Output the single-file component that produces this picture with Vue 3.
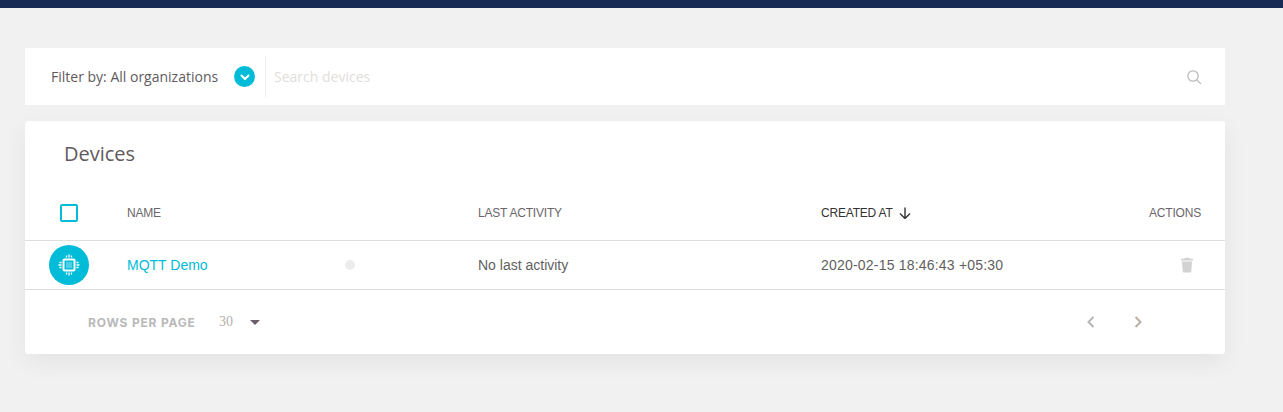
<script setup>
const columns = [
  { key: 'select', label: '' },
  { key: 'name', label: 'NAME' },
  { key: 'activity', label: 'LAST ACTIVITY' },
  { key: 'created', label: 'CREATED AT' },
  { key: 'actions', label: 'ACTIONS' }
]

const device = {
  name: 'MQTT Demo',
  activity: 'No last activity',
  created: '2020-02-15 18:46:43 +05:30'
}
</script>

<template>
  <div class="page">
    <div class="topbar"></div>
    <main class="content">
      <section class="filter-bar">
        <span class="filter-label">Filter by: All organizations</span>
        <span class="filter-toggle">
          <svg width="12" height="12" viewBox="0 0 12 12" fill="none" stroke="#fff" stroke-width="2" stroke-linecap="round" stroke-linejoin="round">
            <path d="M2.5 4.5 6 8l3.5-3.5" />
          </svg>
        </span>
        <span class="filter-search">Search devices</span>
        <svg class="search-icon" width="16" height="16" viewBox="0 0 16 16" fill="none" stroke="#bdbdbd" stroke-width="1.3" stroke-linecap="round">
          <circle cx="7" cy="7" r="5.2" />
          <path d="M11 11l3.6 3.6" />
        </svg>
      </section>

      <section class="card">
        <h2 class="card-title">Devices</h2>

        <div class="table-row table-head">
          <div class="cell cell-select"><span class="checkbox"></span></div>
          <div class="cell">{{ columns[1].label }}</div>
          <div class="cell">{{ columns[2].label }}</div>
          <div class="cell cell-sorted">
            {{ columns[3].label }}
            <svg width="12" height="12" viewBox="0 0 12 12" fill="none" stroke="#333" stroke-width="1.4">
              <path d="M6 0.5v11M1 6.5l5 5 5-5" />
            </svg>
          </div>
          <div class="cell cell-actions">{{ columns[4].label }}</div>
        </div>

        <div class="table-row table-body">
          <div class="cell cell-select">
            <span class="avatar">
              <svg width="24" height="24" viewBox="0 0 24 24" fill="none" stroke="#fff">
                <rect x="6.5" y="6.5" width="11" height="11" rx="1" stroke-width="2" />
                <rect x="9" y="9" width="6" height="6" fill="#fff" fill-opacity="0.3" stroke="none" />
                <path stroke-width="1.3" d="M9.5 2.5v2M12 1.5v3M14.5 2.5v2M9.5 19.5v2M12 19.5v3M14.5 19.5v2M2.5 9.5h2M1.5 12h3M2.5 14.5h2M19.5 9.5h2M19.5 12h3M19.5 14.5h2" />
              </svg>
            </span>
          </div>
          <div class="cell cell-name">
            <a class="device-link">{{ device.name }}</a>
            <span class="status-dot"></span>
          </div>
          <div class="cell">{{ device.activity }}</div>
          <div class="cell cell-date">{{ device.created }}</div>
          <div class="cell cell-actions">
            <svg class="trash" width="14" height="16" viewBox="0 0 14 16" fill="#d2d2d2">
              <path d="M5 0.8h4l.7 1H13v1.7H1V1.8h3.3zM2 4.5h10l-.7 10a1 1 0 0 1-1 .9H3.7a1 1 0 0 1-1-.9z" />
            </svg>
          </div>
        </div>

        <footer class="pager">
          <span class="pager-label">ROWS PER PAGE</span>
          <span class="pager-count">30</span>
          <span class="pager-caret"></span>
          <span class="pager-arrows">
            <svg width="12" height="14" viewBox="0 0 12 14" fill="none" stroke="#b5b5b5" stroke-width="2">
              <path d="M8.5 2 3.5 7l5 5" />
            </svg>
            <svg width="12" height="14" viewBox="0 0 12 14" fill="none" stroke="#b8b0a8" stroke-width="2">
              <path d="M3.5 2l5 5-5 5" />
            </svg>
          </span>
        </footer>
      </section>
    </main>
  </div>
</template>

<style>
body {
  background: #f1f1f1;
}
</style>

<style scoped>
.page {
  height: 412px;
  overflow: hidden;
  background: #f1f1f1;
}

.topbar {
  height: 8px;
  background: #172b54;
}

.content {
  width: 1200px;
  margin-left: 25px;
  padding-top: 40px;
}

.filter-bar {
  display: flex;
  align-items: center;
  height: 57px;
  margin-bottom: 16px;
  padding: 0 23px 0 26px;
  background: #fff;
  font-family: "Open Sans", sans-serif;
  font-size: 14px;
}

.filter-label {
  width: 183px;
  color: #5f5a5e;
}

.filter-toggle {
  display: flex;
  align-items: center;
  justify-content: center;
  width: 21px;
  height: 21px;
  border-radius: 50%;
  background: #00bcd8;
}

.filter-search {
  flex: 1;
  align-self: center;
  height: 41px;
  margin-left: 10px;
  padding-left: 8px;
  border-left: 1px solid #eeeeee;
  line-height: 41px;
  color: #dfdedb;
}

.card {
  height: 233px;
  border-radius: 3px;
  background: #fff;
  box-shadow: 0 8px 24px rgba(0, 0, 0, 0.06);
}

.card-title {
  height: 64px;
  margin: 0;
  padding: 19px 0 0 39px;
  box-sizing: border-box;
  font-family: "Open Sans", sans-serif;
  font-size: 20px;
  line-height: 28px;
  font-weight: 400;
  color: #5f5a5e;
}

.table-row {
  display: grid;
  grid-template-columns: 102px 351px 343px 1fr auto;
  padding-right: 24px;
  border-bottom: 1px solid #dedede;
  font-family: "Liberation Sans", sans-serif;
}

.table-head {
  height: 55px;
  font-size: 12px;
  letter-spacing: -0.2px;
  color: #6b666a;
}

.table-body {
  height: 48px;
  font-size: 14px;
  color: #5f5f5f;
}

.cell {
  display: flex;
  align-items: center;
}

.cell-select {
  padding-left: 24px;
}

.table-head .cell-select {
  padding-left: 35px;
}

.checkbox {
  width: 14px;
  height: 14px;
  border: 2px solid #00bcd8;
  border-radius: 2px;
}

.cell-sorted {
  gap: 6px;
  color: #333;
}

.cell-date {
  letter-spacing: 0.2px;
}

.cell-actions {
  grid-column: 5;
  justify-content: flex-end;
}

.avatar {
  display: flex;
  align-items: center;
  justify-content: center;
  width: 40px;
  height: 40px;
  border-radius: 50%;
  background: #00bcd8;
}

.cell-name {
  justify-content: space-between;
  padding-right: 123px;
}

.device-link {
  color: #00bcd8;
}

.status-dot {
  width: 10px;
  height: 10px;
  border-radius: 50%;
  background: #ececec;
}

.trash {
  margin-right: 7px;
}

.pager {
  display: flex;
  align-items: center;
  height: 64px;
  padding-left: 63px;
}

.pager-label {
  width: 131px;
  font-family: Inter, sans-serif;
  font-size: 12px;
  font-weight: 700;
  letter-spacing: 0.8px;
  color: #b9b9b9;
}

.pager-count {
  width: 31px;
  font-family: "Liberation Serif", serif;
  font-size: 14px;
  color: #b4b0ac;
}

.pager-caret {
  width: 0;
  height: 0;
  border-left: 5px solid transparent;
  border-right: 5px solid transparent;
  border-top: 5px solid #6b5e68;
}

.pager-arrows {
  display: flex;
  gap: 35px;
  margin-left: auto;
  margin-right: 81px;
}
</style>
